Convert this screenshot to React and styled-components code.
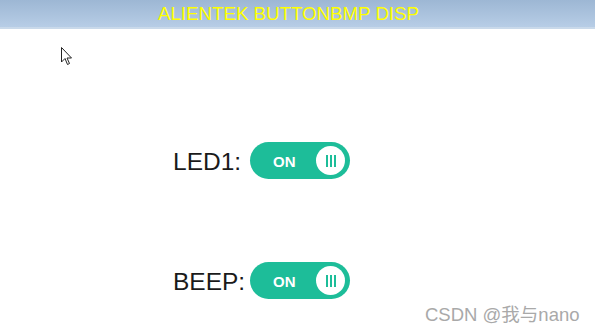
import React from 'react';
import styled, { createGlobalStyle } from 'styled-components';

const Global = createGlobalStyle`
	html, body {
		margin: 0;
		padding: 0;
		background: #ffffff;
	}
	body {
		width: 595px;
		height: 330px;
		overflow: hidden;
		font-family: "Liberation Sans", Arial, sans-serif;
	}
`;

const Screen = styled.div`
	position: relative;
	width: 595px;
	height: 330px;
	background: #ffffff;
`;

const Header = styled.div`
	height: 29px;
	border-bottom: 2px solid #c9d9ea;
	background: linear-gradient(#9db7d4, #b7cde6);
	display: flex;
	align-items: center;
	padding-left: 158px;
	color: #ffff00;
	font-size: 18.7px;
	line-height: 1;
	padding-top: 1px;
	box-sizing: border-box;
`;

const Body = styled.div`
	display: flex;
	flex-direction: column;
	gap: 83px;
	padding: 113px 0 0 173px;
`;

const Row = styled.div`
	display: flex;
	align-items: center;
`;

const Label = styled.span`
	font-size: 24.5px;
	color: #1a1a1a;
	font-family: "Liberation Sans", Arial, sans-serif;
	width: 77px;
	padding-top: 2px;
`;

const Toggle = styled.div`
	width: 100px;
	height: 37px;
	border-radius: 19px;
	background: #1dbd99;
	display: flex;
	align-items: center;
	box-sizing: border-box;
	padding: 0 5px 0 23px;
	justify-content: space-between;
`;

const OnText = styled.span`
	color: #fff;
	font-weight: bold;
	font-size: 15px;
	font-family: "Liberation Sans", Arial, sans-serif;
	padding-top: 1px;
`;

const Knob = styled.div`
	width: 29px;
	height: 29px;
	border-radius: 50%;
	background: #fff;
	display: flex;
	align-items: center;
	justify-content: center;
	gap: 2px;
`;

const Bar = styled.span`
	width: 2px;
	height: 12px;
	background: #1dbd99;
`;

const Cursor = styled.svg`
	position: absolute;
	left: 61px;
	top: 47px;
`;

const Watermark = styled.div`
	position: absolute;
	left: 425px;
	top: 300px;
	font-size: 18.5px;
	color: #a9a9a9;
	font-family: "Liberation Sans", "Noto Sans CJK SC", sans-serif;
`;

const Switch = () => (
	<Toggle>
		<OnText>ON</OnText>
		<Knob>
			<Bar />
			<Bar />
			<Bar />
		</Knob>
	</Toggle>
);

export default function App() {
	return (
		<Screen>
			<Global />
			<Header>ALIENTEK BUTTONBMP DISP</Header>
			<Body>
				<Row>
					<Label>LED1:</Label>
					<Switch />
				</Row>
				<Row>
					<Label>BEEP:</Label>
					<Switch />
				</Row>
			</Body>
			<Cursor width="12" height="19" viewBox="0 0 12 19">
				<path
					d="M0.5 0.5 L0.5 15 L4 11.5 L6.5 17.5 L8.5 16.5 L6 11 L10.5 11 Z"
					fill="#fff"
					stroke="#222"
					strokeWidth="1"
					strokeLinejoin="miter"
				/>
			</Cursor>
			<Watermark>CSDN @我与nano</Watermark>
		</Screen>
	);
}
